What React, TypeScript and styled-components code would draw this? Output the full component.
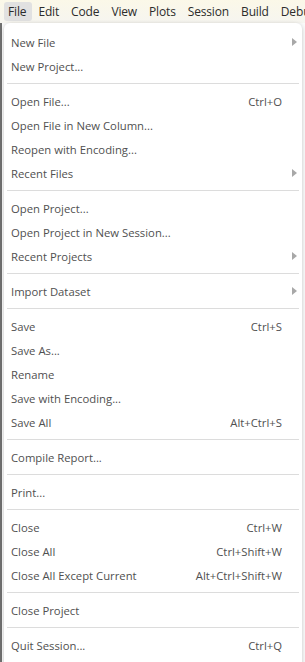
import React from 'react'
import styled, { createGlobalStyle } from 'styled-components'

type Entry =
  | { kind: 'item'; label: string; shortcut?: string; submenu?: boolean }
  | { kind: 'sep' }

const menuBar = ['File', 'Edit', 'Code', 'View', 'Plots', 'Session', 'Build', 'Debug']

const entries: Entry[] = [
  { kind: 'item', label: 'New File', submenu: true },
  { kind: 'item', label: 'New Project...' },
  { kind: 'sep' },
  { kind: 'item', label: 'Open File...', shortcut: 'Ctrl+O' },
  { kind: 'item', label: 'Open File in New Column...' },
  { kind: 'item', label: 'Reopen with Encoding...' },
  { kind: 'item', label: 'Recent Files', submenu: true },
  { kind: 'sep' },
  { kind: 'item', label: 'Open Project...' },
  { kind: 'item', label: 'Open Project in New Session...' },
  { kind: 'item', label: 'Recent Projects', submenu: true },
  { kind: 'sep' },
  { kind: 'item', label: 'Import Dataset', submenu: true },
  { kind: 'sep' },
  { kind: 'item', label: 'Save', shortcut: 'Ctrl+S' },
  { kind: 'item', label: 'Save As...' },
  { kind: 'item', label: 'Rename' },
  { kind: 'item', label: 'Save with Encoding...' },
  { kind: 'item', label: 'Save All', shortcut: 'Alt+Ctrl+S' },
  { kind: 'sep' },
  { kind: 'item', label: 'Compile Report...' },
  { kind: 'sep' },
  { kind: 'item', label: 'Print...' },
  { kind: 'sep' },
  { kind: 'item', label: 'Close', shortcut: 'Ctrl+W' },
  { kind: 'item', label: 'Close All', shortcut: 'Ctrl+Shift+W' },
  { kind: 'item', label: 'Close All Except Current', shortcut: 'Alt+Ctrl+Shift+W' },
  { kind: 'sep' },
  { kind: 'item', label: 'Close Project' },
  { kind: 'sep' },
  { kind: 'item', label: 'Quit Session...', shortcut: 'Ctrl+Q' },
]

const GlobalStyle = createGlobalStyle`
  html, body {
    margin: 0;
    padding: 0;
    background: #f4f4f4;
    font-family: "Open Sans", "Noto Sans", sans-serif;
    overflow: hidden;
  }
`

const Page = styled.div`
  width: 305px;
  height: 662px;
  display: flex;
  flex-direction: column;
  overflow: hidden;
`

const MenuBar = styled.div`
  height: 23px;
  display: flex;
  align-items: center;
  padding-left: 4px;
  background: linear-gradient(#fbf8e8, #f6f5f0);
  white-space: nowrap;
  overflow: hidden;
`

const MenuBarItem = styled.div<{ $active?: boolean }>`
  flex: none;
  height: 19px;
  line-height: 19px;
  padding: 0 6px 0 4px;
  margin-right: 2px;
  border-radius: 3px;
  font-size: 12px;
  letter-spacing: -0.15px;
  color: #2c2c2c;
  background: ${(p) => (p.$active ? '#e1e1e1' : 'transparent')};
`

const Workspace = styled.div`
  position: relative;
  flex: 1;
  border-left: 2px solid #707070;
  background: #fafafa;
`

const Dropdown = styled.div`
  position: absolute;
  top: 0;
  left: 2px;
  width: 298px;
  bottom: -8px;
  background: #ffffff;
  border-radius: 6px;
  box-shadow: 0 1px 4px rgba(0, 0, 0, 0.22);
  padding-top: 7px;
`

const Row = styled.div`
  height: 24px;
  display: flex;
  align-items: center;
  padding: 0 5px 0 7px;
  font-size: 11.3px;
  color: #505050;
`

const Label = styled.span`
  flex: 1;
  white-space: nowrap;
`

const Shortcut = styled.span`
  margin-right: 15px;
  white-space: nowrap;
`

const Arrow = styled.span`
  width: 0;
  height: 0;
  border-top: 4px solid transparent;
  border-bottom: 4px solid transparent;
  border-left: 5px solid #a8a8a8;
`

const Separator = styled.div`
  height: 1px;
  margin: 5px 3px 5px 3px;
  background: #dcdcdc;
`

const App: React.FC = () => {
  return (
    <Page>
      <GlobalStyle />
      <MenuBar>
        {menuBar.map((m, i) => (
          <MenuBarItem key={m} $active={i === 0}>
            {m}
          </MenuBarItem>
        ))}
      </MenuBar>
      <Workspace>
        <Dropdown>
          {entries.map((e, i) =>
            e.kind === 'sep' ? (
              <Separator key={i} />
            ) : (
              <Row key={i}>
                <Label>{e.label}</Label>
                {e.shortcut ? <Shortcut>{e.shortcut}</Shortcut> : null}
                {e.submenu ? <Arrow /> : null}
              </Row>
            )
          )}
        </Dropdown>
      </Workspace>
    </Page>
  )
}

export default App
